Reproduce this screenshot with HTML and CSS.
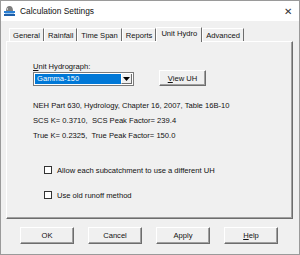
FILE: index.html
```html
<!DOCTYPE html>
<html>
<head>
  <meta charset="UTF-8">
  <title>Calculation Settings</title>
  <link rel="stylesheet" href="styles.css">
</head>
<body>
  <div class="window">
    <!-- Title bar -->
    <div class="titlebar">
      <svg class="app-icon" width="11" height="12" viewBox="0 0 11 12">
        <path d="M2 6 Q2 1 5.5 1 Q9 1 9 6 Z" fill="#7d7d7d"/>
        <rect x="3" y="3" width="1" height="2" fill="#c8c8c8"/>
        <rect x="0" y="6" width="11" height="2" fill="#2a7fd4"/>
        <rect x="1" y="8" width="9" height="1" fill="#9cc8f0"/>
        <rect x="0" y="9" width="11" height="2" fill="#1f5fa8"/>
      </svg>
      <span class="title">Calculation Settings</span>
      <span class="close">&#x2715;</span>
    </div>

    <div class="client">
      <!-- Tabs -->
      <div class="tabs">
        <div class="tab">General</div>
        <div class="tab">Rainfall</div>
        <div class="tab">Time Span</div>
        <div class="tab">Reports</div>
        <div class="tab active">Unit Hydro</div>
        <div class="tab">Advanced</div>
      </div>

      <!-- Unit Hydro page -->
      <div class="panel">
        <div class="uh-row">
          <div class="uh-field">
            <label class="label"><u>U</u>nit Hydrograph:</label>
            <div class="combo">
              <span class="combo-value">Gamma-150</span>
              <span class="combo-btn">
                <svg width="7" height="4" viewBox="0 0 7 4"><path d="M0 0 H7 L3.5 4 Z" fill="#000"/></svg>
              </span>
            </div>
          </div>
          <div class="btn view-btn"><u>V</u>iew UH</div>
        </div>

        <div class="info">
          <div>NEH Part 630, Hydrology, Chapter 16, 2007, Table 16B-10</div>
          <div>SCS K= 0.3710,&nbsp; SCS Peak Factor= 239.4</div>
          <div>True K= 0.2325,&nbsp; True Peak Factor= 150.0</div>
        </div>

        <div class="checks">
          <div class="check"><span class="box"></span>Allow each subcatchment to use a different UH</div>
          <div class="check"><span class="box"></span>Use old runoff method</div>
        </div>
      </div>

      <!-- Dialog buttons -->
      <div class="buttons">
        <div class="btn">OK</div>
        <div class="btn">Cancel</div>
        <div class="btn">Apply</div>
        <div class="btn"><u>H</u>elp</div>
      </div>
    </div>
  </div>
</body>
</html>
```

FILE: styles.css
```css
/* ========== WINDOW ========== */
body {
  margin: 0;
  background: #ffffff;
  font-family: "Liberation Sans", Arial, sans-serif;
  font-size: 7.6px;
  color: #111;
}

.window {
  width: 300px;
  height: 255px;
  box-sizing: border-box;
  border: 1px solid #9a9a9a;
  background: #f0f0f0;
  display: flex;
  flex-direction: column;
}

.titlebar {
  height: 20px;
  background: #fff;
  display: flex;
  align-items: center;
  padding-left: 3px;
  padding-right: 7px;
}

.app-icon {
  margin-right: 5px;
}

.title {
  font-size: 8.4px;
  flex: 1;
}

.close {
  font-size: 10px;
  color: #333;
}

.client {
  flex: 1;
  display: flex;
  flex-direction: column;
  padding: 6px 6px 0 5px;
}

/* ========== TABS ========== */
.tabs {
  display: flex;
  align-items: flex-end;
  height: 14px;
  padding-left: 3px;
}

.tab {
  height: 13px;
  line-height: 13px;
  padding: 0 3px;
  border-left: 1px solid #fff;
  border-top: 1px solid #fff;
  border-right: 1px solid #6d6d6d;
  box-sizing: border-box;
}

.tab.active {
  height: 15px;
  line-height: 12px;
  margin-bottom: -1px;
  background: #f0f0f0;
  position: relative;
  z-index: 2;
  padding: 0 4px;
}

.panel {
  height: 178px;
  box-sizing: border-box;
  border-left: 1px solid #fff;
  border-top: 1px solid #fff;
  border-right: 1px solid #6d6d6d;
  border-bottom: 1px solid #6d6d6d;
  box-shadow: inset -1px -1px 0 #a0a0a0;
  padding: 20px 0 0 26px;
}

/* ========== UNIT HYDRO PAGE ========== */
.uh-row {
  display: flex;
  align-items: flex-end;
  gap: 25px;
}

.label {
  display: block;
  margin-bottom: 1px;
}

.combo {
  width: 101px;
  height: 14px;
  box-sizing: border-box;
  border: 1px solid #7a7a7a;
  background: #fff;
  display: flex;
  padding: 1px;
}

.combo-value {
  flex: 1;
  background: #0078d7;
  color: #fff;
  line-height: 10px;
  padding-left: 2px;
}

.combo-btn {
  width: 11px;
  display: flex;
  align-items: center;
  justify-content: center;
  background: #f0f0f0;
  border-left: 1px solid #fff;
  border-right: 1px solid #6d6d6d;
  border-bottom: 1px solid #6d6d6d;
  box-sizing: border-box;
}

.btn {
  height: 17px;
  box-sizing: border-box;
  border-left: 1px solid #fff;
  border-top: 1px solid #fff;
  border-right: 1px solid #6d6d6d;
  border-bottom: 1px solid #6d6d6d;
  box-shadow: inset -1px -1px 0 #a0a0a0;
  display: flex;
  align-items: center;
  justify-content: center;
}

.view-btn {
  width: 47px;
  height: 16px;
}

.info {
  margin-top: 12px;
  line-height: 15px;
}

.checks {
  margin-top: 22px;
  display: flex;
  flex-direction: column;
  gap: 15px;
}

.check {
  display: flex;
  align-items: center;
  margin-left: 11px;
  height: 10px;
}

.box {
  width: 8px;
  height: 8px;
  box-sizing: border-box;
  border: 1px solid #333;
  background: #fff;
  margin-right: 5px;
}

/* ========== DIALOG BUTTONS ========== */
.buttons {
  display: flex;
  gap: 14px;
  padding: 8px 0 0 14px;
}

.buttons .btn {
  width: 54px;
}
```
